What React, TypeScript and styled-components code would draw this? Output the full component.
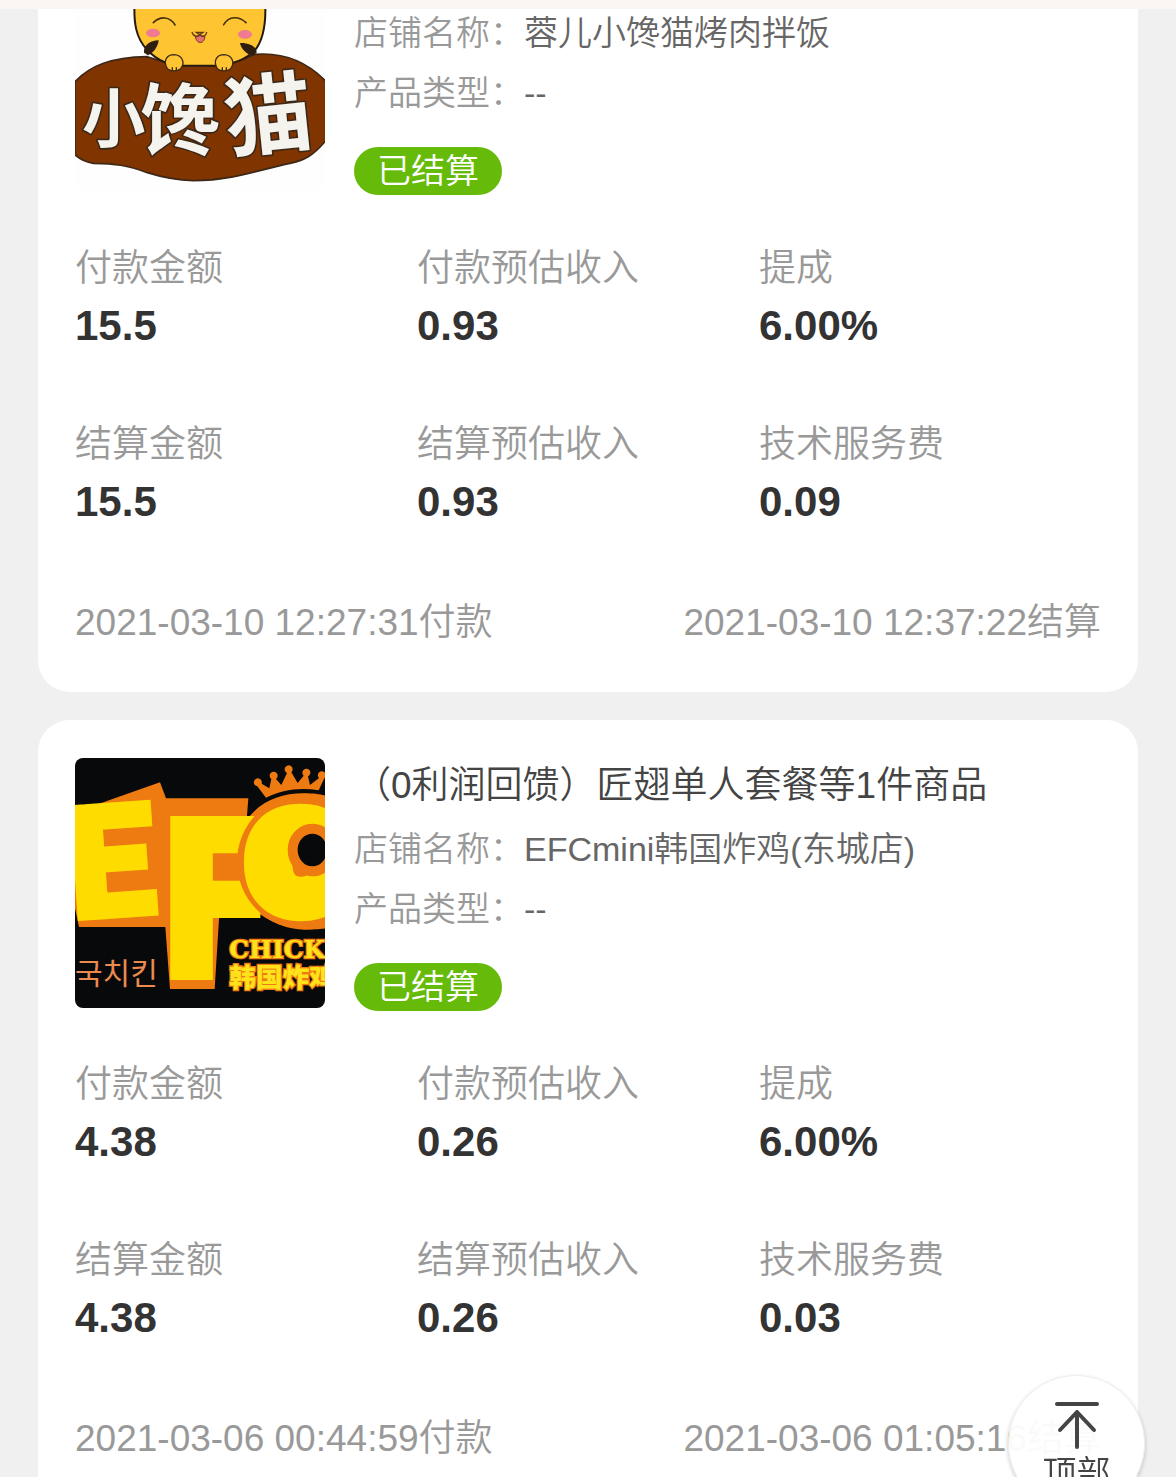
import React from "react";
import styled, { createGlobalStyle } from "styled-components";

const GlobalStyle = createGlobalStyle`
  *, *::before, *::after { box-sizing: border-box; }
  body {
    margin: 0;
    background: #f0f0f0;
    color: #333;
    font-family: "Liberation Sans", "Noto Sans CJK SC", sans-serif;
    font-weight: 350;
  }
`;

const Screen = styled.div`
  height: 100vh;
  overflow-y: auto;
  scrollbar-width: none;
`;

const TopStrip = styled.div`
  position: sticky;
  top: 0;
  z-index: 1;
  height: 9px;
  background: #fbf6f3;
`;

const OrderList = styled.main`
  display: flex;
  flex-direction: column;
  gap: 28px;
  padding: 0 38px 28px;
  margin-top: -6px;
`;

const Card = styled.article<{ $continued?: boolean }>`
  padding: ${(p) => (p.$continued ? "0 37px 43px" : "38px 37px 43px")};
  border-radius: ${(p) => (p.$continued ? "0 0 32px 32px" : "32px")};
  background: #fff;
`;

const Summary = styled.header`
  display: flex;
  align-items: flex-start;
  gap: 29px;
`;

const Thumb = styled.svg`
  display: block;
  flex: none;
  width: 250px;
  border-radius: 8px;
`;

const Info = styled.div`
  flex: 1;
  min-width: 0;
`;

const Title = styled.h2`
  margin: 0 0 5px;
  font-size: 37px;
  line-height: 56px;
  font-weight: 350;
  color: #444;
`;

const InfoRow = styled.div`
  font-size: 34px;
  line-height: 60px;
  color: #666;
`;

const InfoLabel = styled.span`
  color: #999;
`;

const Badge = styled.span`
  display: flex;
  align-items: center;
  width: fit-content;
  height: 48px;
  margin-top: 24px;
  padding: 0 23px;
  border-radius: 24px;
  background: #66bb0a;
  color: #fff;
  font-size: 34px;
  line-height: 48px;
`;

const Stats = styled.dl`
  display: grid;
  grid-template-columns: repeat(3, 1fr);
  row-gap: 62px;
  margin: 48px 0 64px;
`;

const StatLabel = styled.dt`
  font-size: 37px;
  line-height: 52px;
  color: #999;
`;

const StatValue = styled.dd`
  margin: 0;
  font-size: 42px;
  line-height: 62px;
  font-weight: 700;
  color: #333;
`;

const Times = styled.footer`
  display: flex;
  justify-content: space-between;
  font-size: 37px;
  line-height: 52px;
  color: #999;
`;

const TopButton = styled.button`
  position: fixed;
  right: 31px;
  bottom: -35px;
  display: flex;
  flex-direction: column;
  align-items: center;
  gap: 4px;
  width: 137px;
  height: 137px;
  padding: 25px 0 0;
  border: 1px solid #ececec;
  border-radius: 50%;
  background: rgba(255, 255, 255, 0.95);
  box-shadow: 0 2px 4px rgba(0, 0, 0, 0.22);
  color: #444;
  font: inherit;
  font-size: 34px;
  line-height: 36px;
`;

const logoFont = '"Noto Sans CJK SC", sans-serif';

function CatLogo() {
  return (
    <Thumb viewBox="45 9 750 567" role="img" aria-label="小馋猫">
      <rect x="45" y="9" width="750" height="567" fill="#fefefe" />
      <path
        d="M45 245C90 198 150 172 262 170C340 200 500 205 585 163C680 155 750 195 797 243V422C760 468 730 482 690 490C600 508 520 542 400 542C340 540 300 530 262 518C200 495 165 491 100 490C75 487 60 478 45 465Z"
        fill="#803400"
        stroke="#3d2817"
        strokeWidth="5"
      />
      <path
        d="M224 0C220 70 228 115 262 150C290 180 330 197 370 197H480C520 194 560 175 584 152C610 120 620 75 615 0Z"
        fill="#fec431"
        stroke="#241a12"
        strokeWidth="6"
      />
      <path d="M252 158C250 135 270 122 296 121C294 143 278 159 264 166Z" fill="#2f1d10" />
      <path d="M590 158C590 138 565 128 540 129C543 147 560 162 576 168Z" fill="#2f1d10" />
      <path d="M280 68C300 48 330 48 345 75M491 74C507 47 537 48 558 68" fill="none" stroke="#45300f" strokeWidth="5" strokeLinecap="round" />
      <ellipse cx="279" cy="99" rx="21" ry="13" fill="#f07a92" />
      <ellipse cx="555" cy="103" rx="21" ry="13" fill="#f07a92" />
      <path d="M406 110C410 132 431 135 435 110L420 106Z" fill="#e66d70" stroke="#63391a" strokeWidth="3" />
      <path d="M396 96C400 112 418 112 419 102C422 112 438 112 440 96M409 97H429L419 104Z" fill="none" stroke="#63391a" strokeWidth="4" />
      <g fill="#fec431" stroke="#3d2817" strokeWidth="4" strokeLinecap="round">
        <path d="M322 206C307 180 323 164 342 164C366 165 377 187 362 206C352 214 333 215 322 206Z" />
        <path d="M472 206C457 180 473 164 492 164C516 165 526 187 512 206C502 214 483 215 472 206Z" />
        <path d="M337 203V211M349 203V211M487 203V211M499 203V211" />
      </g>
      <g
        fill="#f5f3ee"
        stroke="#3d2817"
        strokeWidth="10"
        strokeLinejoin="round"
        paintOrder="stroke"
        fontFamily={logoFont}
        fontWeight="700"
      >
        <text x="66" y="426" fontSize="190">小</text>
        <text x="242" y="448" fontSize="236">馋</text>
        <text x="492" y="442" fontSize="264" transform="rotate(-6 620 340)">猫</text>
      </g>
    </Thumb>
  );
}

function ChickenLogo() {
  return (
    <Thumb viewBox="45 39 750 750" role="img" aria-label="EFC 韩国炸鸡">
      <rect x="45" y="39" width="750" height="750" fill="#08090b" />
      <g fill="#ee7a12">
        <path d="M45 202L300 112L318 160H565L560 225C600 170 660 145 730 145C760 145 780 148 797 152V550C690 565 590 530 541 440L534 486L480 474L464 732H330L316 546H57L45 490Z" />
        <path d="M618 158L592 124A12 12 0 1 1 605 116L628 130L634 102A12 12 0 1 1 648 102L664 120L681 84A12 12 0 1 1 694 82L713 114L731 92A12 12 0 1 1 744 94L750 120L777 99A12 12 0 1 1 793 100L776 136C720 126 665 134 618 158Z" />
      </g>
      <g fill="#ffdc00" stroke="#ffdc00" fontWeight="700">
        <text x="28" y="505" fontSize="450" strokeWidth="28" fontFamily="Roboto, sans-serif" transform="rotate(-4 180 360)">E</text>
        <text x="312" y="686" fontSize="640" strokeWidth="36" fontFamily='"Roboto Condensed", Roboto, sans-serif'>F</text>
      </g>
      <circle cx="735" cy="350" r="204" fill="#ee7a12" />
      <text
        x="583"
        y="480"
        fontSize="365"
        fontFamily='"Liberation Sans", sans-serif'
        fontWeight="700"
        fill="#ffdc00"
        stroke="#ffdc00"
        strokeWidth="92"
      >
        C
      </text>
      <ellipse cx="757" cy="315" rx="59" ry="64" fill="#08090b" stroke="#ee7a12" strokeWidth="30" />
      <text x="45" y="718" fontSize="90" fontFamily='"Noto Sans CJK KR", sans-serif' fontWeight="400" fill="#ed8a50">국치킨</text>
      <g fill="#ffe21a" stroke="#ee7a12" strokeWidth="8" paintOrder="stroke">
        <text x="508" y="638" fontSize="74" fontFamily='"DejaVu Serif", serif' fontWeight="700">CHICK</text>
        <text x="508" y="725" fontSize="80" fontFamily={logoFont} fontWeight="900">韩国炸鸡</text>
      </g>
    </Thumb>
  );
}

function ToTopIcon() {
  return (
    <svg width="46" height="50" viewBox="0 0 46 50" fill="none" stroke="#444" strokeWidth="4" strokeLinecap="round" strokeLinejoin="round" aria-hidden="true">
      <path d="M3 3H43M23 46V11M6 29L23 11L40 29" />
    </svg>
  );
}

type Order = {
  logo: React.ReactNode;
  title?: string;
  shop: string;
  stats: [string, string][];
  paid: string;
  settled: string;
};

const orders: Order[] = [
  {
    logo: <CatLogo />,
    shop: "蓉儿小馋猫烤肉拌饭",
    stats: [
      ["付款金额", "15.5"],
      ["付款预估收入", "0.93"],
      ["提成", "6.00%"],
      ["结算金额", "15.5"],
      ["结算预估收入", "0.93"],
      ["技术服务费", "0.09"],
    ],
    paid: "2021-03-10 12:27:31",
    settled: "2021-03-10 12:37:22",
  },
  {
    logo: <ChickenLogo />,
    title: "（0利润回馈）匠翅单人套餐等1件商品",
    shop: "EFCmini韩国炸鸡(东城店)",
    stats: [
      ["付款金额", "4.38"],
      ["付款预估收入", "0.26"],
      ["提成", "6.00%"],
      ["结算金额", "4.38"],
      ["结算预估收入", "0.26"],
      ["技术服务费", "0.03"],
    ],
    paid: "2021-03-06 00:44:59",
    settled: "2021-03-06 01:05:16",
  },
];

function OrderCard({ order }: { order: Order }) {
  return (
    <Card $continued={!order.title}>
      <Summary>
        {order.logo}
        <Info>
          {order.title && <Title>{order.title}</Title>}
          <InfoRow>
            <InfoLabel>店铺名称：</InfoLabel>
            {order.shop}
          </InfoRow>
          <InfoRow>
            <InfoLabel>产品类型：</InfoLabel>
            --
          </InfoRow>
          <Badge>已结算</Badge>
        </Info>
      </Summary>
      <Stats>
        {order.stats.map(([label, value]) => (
          <div key={label}>
            <StatLabel>{label}</StatLabel>
            <StatValue>{value}</StatValue>
          </div>
        ))}
      </Stats>
      <Times>
        <span>{order.paid}付款</span>
        <span>{order.settled}结算</span>
      </Times>
    </Card>
  );
}

export default function App() {
  return (
    <>
      <GlobalStyle />
      <Screen>
        <TopStrip />
        <OrderList>
          {orders.map((order) => (
            <OrderCard key={order.paid} order={order} />
          ))}
        </OrderList>
        <TopButton type="button">
          <ToTopIcon />
          顶部
        </TopButton>
      </Screen>
    </>
  );
}
